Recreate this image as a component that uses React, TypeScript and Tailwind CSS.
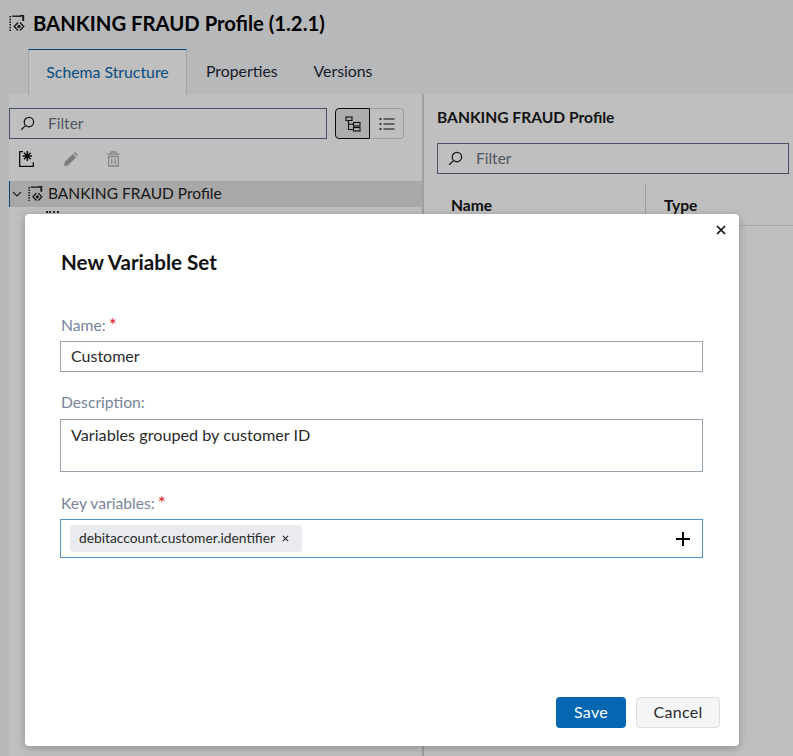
import React from "react";

function ProfileIcon({ className = "" }: { className?: string }) {
  return (
    <svg viewBox="0 0 16 17" className={className} fill="none" stroke="currentColor">
      <path d="M1.2 1v15" strokeWidth="1.6" strokeDasharray="1.5 1.2" />
      <path d="M3 1.2h9" strokeWidth="1.4" />
      <path d="M11 .5h3.2v5.5" strokeWidth="2" />
      <path d="M9 7.6 5.3 11.5 9 15.4M11 7.6l3.7 3.9-3.7 3.9" strokeWidth="1.4" />
      <circle cx="10" cy="11.5" r="1.7" fill="currentColor" stroke="none" />
    </svg>
  );
}

function SearchIcon() {
  return (
    <svg viewBox="0 0 16 16" className="w-[15px] h-[15px] text-[#1a1a1a]" fill="none" stroke="currentColor" strokeWidth="1.3">
      <circle cx="9.5" cy="6.5" r="5" />
      <path d="M5.8 10.2 1.3 14.7" />
    </svg>
  );
}

function FilterBox({ className }: { className: string }) {
  return (
    <div className={`flex items-center h-[31px] border border-[#5f6f86] pl-[10px] ${className}`}>
      <SearchIcon />
      <span className="ml-[13px] text-[15.5px] text-[#6c7482]">Filter</span>
    </div>
  );
}

function Label({ text, required }: { text: string; required?: boolean }) {
  return (
    <div className="flex text-[15.7px] leading-[18px] text-[#77849a]">
      {text}
      {required && <span className="ml-[3px] text-[19px] leading-[18px] text-[#d8232a]">*</span>}
    </div>
  );
}

export default function App() {
  return (
    <div
      className="relative w-[793px] h-[756px] overflow-hidden bg-[#f5f6f8] text-[#111]"
      style={{ fontFamily: "Lato, 'Noto Sans', sans-serif" }}
    >
      <div className="flex items-center h-[49px] pl-[9px] pb-[3px]">
        <ProfileIcon className="w-[16px] h-[17px] text-[#222]" />
        <h1 className="ml-[8px] text-[20.3px] font-bold leading-none text-black">BANKING FRAUD Profile (1.2.1)</h1>
      </div>

      <div className="flex h-[45px] pl-[28px] text-[15.8px]">
        <div className="w-[159px] h-[46px] pb-[2px] bg-white border-t border-x border-t-[#0b5a96] border-x-[#d9dce1] flex items-center justify-center text-[#0a68ad]">
          Schema Structure
        </div>
        <div className="ml-[19px] pb-[1px] flex items-center text-[#1c2736]">Properties</div>
        <div className="ml-[36px] pb-[1px] flex items-center text-[#1c2736]">Versions</div>
      </div>

      <div className="flex h-[662px] ml-[9px] bg-white">
        <div className="w-[413px] shrink-0">
          <div className="flex items-center mt-[14px]">
            <FilterBox className="w-[318px]" />
            <div className="ml-[8px] flex h-[31px] w-[69px]">
              <div className="w-[35px] flex items-center justify-center bg-[#e6e7e9] border border-[#111] rounded-l-[4px]">
                <svg viewBox="0 0 16 16" className="w-[16px] h-[16px] text-[#111]" fill="none" stroke="currentColor" strokeWidth="1.1">
                  <rect x="1" y="1" width="6" height="3.5" />
                  <rect x="8.5" y="6.5" width="6.5" height="3.5" />
                  <rect x="8.5" y="11.5" width="6.5" height="3.5" />
                  <path d="M3.5 4.5v9h5M3.5 8.2h5" />
                </svg>
              </div>
              <div className="w-[34px] flex items-center justify-center border-y border-r border-[#d3d6db] rounded-r-[4px]">
                <svg viewBox="0 0 16 16" className="w-[16px] h-[16px] text-[#111]" fill="none" stroke="currentColor">
                  <path d="M4.5 3h11M4.5 8h11M4.5 13h11" strokeWidth="1.1" />
                  <path d="M.5 3h2M.5 8h2M.5 13h2" strokeWidth="1.6" />
                </svg>
              </div>
            </div>
          </div>

          <div className="flex items-center h-[42px] pl-[10px] pb-[2px]">
            <svg viewBox="0 0 15 16" className="w-[15px] h-[16px] text-[#111]" fill="none" stroke="currentColor" strokeWidth="1.3">
              <path d="M4 .7H.7v14.6h13.6v-4" />
              <path d="M8.3 0v10M3.6 5h9.4M5 1.7l6.6 6.6M11.6 1.7 5 8.3" strokeWidth="1.5" />
            </svg>
            <svg viewBox="0 0 16 16" className="ml-[29px] w-[15px] h-[15px] text-[#a3a6aa]" fill="currentColor">
              <path d="M1 15l1-4.5L10.5 2l3.5 3.5L5.5 14z" />
              <path d="M11.5 1l1.2-1 3.3 3.3-1 1.2z" />
            </svg>
            <svg viewBox="0 0 13 16" className="ml-[29px] w-[13px] h-[16px] text-[#b0b3b7]" fill="none" stroke="currentColor" strokeWidth="1.3">
              <path d="M.3 3.2h12.4M4 3V1h5v2M1.6 5.5h9.8V15H1.6zM4.8 7.5v5.5M8.2 7.5v5.5" />
            </svg>
          </div>

          <div className="flex items-center h-[26px] pb-[1px] bg-[#e0e0e0] border-l border-[#0b5a96] text-[15.5px] text-[#222]">
            <svg viewBox="0 0 10 10" className="ml-[2px] w-[10px] h-[10px]" fill="none" stroke="currentColor" strokeWidth="1.1">
              <path d="M1 3l4 4 4-4" />
            </svg>
            <ProfileIcon className="ml-[6px] w-[15px] h-[16px]" />
            <span className="ml-[5px]">BANKING FRAUD Profile</span>
          </div>
          <div className="ml-[37px] mt-[4px] w-[13px] h-[2px] border-t-2 border-dotted border-[#333]" />
        </div>

        <div className="w-[2px] shrink-0 bg-[#d5d6d8]" />

        <div className="flex-1 min-w-0 pl-[13px]">
          <div className="mt-[15px] h-[18px] flex items-center text-[15.6px] font-bold text-[#1a1a1a]">BANKING FRAUD Profile</div>
          <FilterBox className="mt-[16px] w-[352px]" />
          <div className="mt-[10px] flex h-[42px] border-b border-[#d9dbde] -mr-[4px] font-bold text-[15.6px] text-[#111]">
            <div className="w-[209px] h-[41px] pl-[14px] pt-[10px] border-r border-[#d2d4d8]">Name</div>
            <div className="pl-[18px] pt-[10px]">Type</div>
          </div>
        </div>
      </div>

      <div className="absolute inset-0 bg-black/25" />

      <div className="absolute left-[25px] top-[214px] w-[714px] h-[532px] bg-white rounded-[4px] shadow-[0_2px_8px_rgba(0,0,0,0.25)] flex flex-col pl-[35px] pr-[19px]">
        <button className="absolute right-[12px] top-[10px] w-[12px] h-[12px]" aria-label="Close">
          <svg viewBox="0 0 12 12" className="w-[12px] h-[12px] text-[#111]" fill="none" stroke="currentColor" strokeWidth="1.7">
            <path d="M2 2l8 8M10 2l-8 8" />
          </svg>
        </button>

        <h2 className="mt-[36px] ml-[1px] text-[20.6px] leading-[24px] font-bold text-[#111]">New Variable Set</h2>

        <div className="mt-[42px] ml-[1px]"><Label text="Name:" required /></div>
        <div className="mt-[7px] w-[643px] h-[31px] pb-[1px] border border-[#9aa3b0] flex items-center pl-[10px] text-[16px] text-[#2a2a2a]">Customer</div>

        <div className="mt-[21px] ml-[1px]"><Label text="Description:" /></div>
        <div className="mt-[8px] w-[643px] h-[53px] border border-[#9aa3b0] pl-[10px] pt-[5px] text-[16.2px] leading-[20px] text-[#2a2a2a]">Variables grouped by customer ID</div>

        <div className="mt-[22px] ml-[1px]"><Label text="Key variables:" required /></div>
        <div className="mt-[7px] w-[643px] h-[39px] border border-[#4f94cc] flex items-center pl-[9px] pr-[12px]">
          <div className="flex items-center h-[27px] w-[232px] rounded-[4px] bg-[#e9ebee] pl-[9px] text-[13.8px] text-[#2a2a2a]">
            debitaccount.customer.identifier
            <svg viewBox="0 0 8 8" className="ml-[7px] w-[7px] h-[7px]" fill="none" stroke="currentColor" strokeWidth="1.3">
              <path d="M1 1l6 6M7 1 1 7" />
            </svg>
          </div>
          <svg viewBox="0 0 14 14" className="ml-auto w-[14px] h-[14px] text-black" fill="none" stroke="currentColor" strokeWidth="2">
            <path d="M7 0v14M0 7h14" />
          </svg>
        </div>

        <div className="mt-auto mb-[18px] flex justify-end gap-[10px] text-[16px] tracking-[0.3px]">
          <button className="w-[70px] h-[31px] pb-[1px] rounded-[4px] bg-[#0566b1] text-white">Save</button>
          <button className="w-[84px] h-[31px] pb-[1px] rounded-[4px] bg-[#f4f5f7] border border-[#dcdee2] text-[#2a2a2a]">Cancel</button>
        </div>
      </div>
    </div>
  );
}
